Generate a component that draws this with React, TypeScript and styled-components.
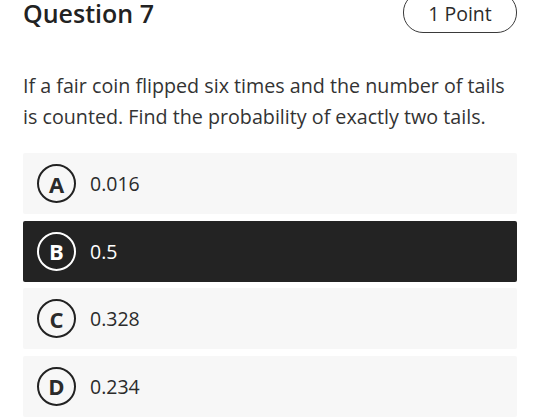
import { createGlobalStyle, styled } from "styled-components"

const GlobalStyle = createGlobalStyle`
    html, body {
        margin: 0;
        padding: 0;
        background: #ffffff;
    }
    body {
        font-family: "Open Sans", "Liberation Sans", sans-serif;
        color: #2b2b2b;
    }
`

const Page = styled.main`
    width: 540px;
    height: 419px;
    overflow: hidden;
    padding: 0 23px;
    box-sizing: border-box;
`

const Header = styled.header`
    display: flex;
    justify-content: space-between;
    align-items: flex-start;
    height: 34px;
`

const Title = styled.h1`
    margin: 0;
    font-size: 25px;
    font-weight: 600;
    line-height: 26px;
    color: #222;
`

const PointPill = styled.span`
    margin-top: -8px;
    width: 114px;
    height: 41px;
    box-sizing: border-box;
    border: 1px solid #3a3a3a;
    border-radius: 20px;
    display: flex;
    align-items: center;
    justify-content: center;
    padding-top: 2px;
    font-size: 19.5px;
    font-weight: 500;
    color: #2b2b2b;
`

const Prompt = styled.p`
    margin: 36px 0 0;
    font-size: 19.7px;
    line-height: 31px;
    color: #333;
`

const Options = styled.ol`
    list-style: none;
    margin: 21px 0 0;
    padding: 0;
    display: flex;
    flex-direction: column;
    gap: 6.6px;
`

const Option = styled.li<{ $selected?: boolean }>`
    height: 61px;
    display: flex;
    align-items: center;
    gap: 14px;
    padding-left: 14px;
    border-radius: 2px;
    background: ${p => (p.$selected ? "#232323" : "#f7f7f7")};
    color: ${p => (p.$selected ? "#ffffff" : "#2b2b2b")};
`

const Letter = styled.span<{ $selected?: boolean }>`
    width: 39px;
    height: 39px;
    box-sizing: border-box;
    border-radius: 50%;
    border: 2px solid ${p => (p.$selected ? "#ffffff" : "#222")};
    display: flex;
    align-items: center;
    justify-content: center;
    font-size: 22px;
    font-weight: 700;
`

const Answer = styled.span`
    font-size: 19.5px;
    font-weight: 500;
`

const answers = [
    { letter: "A", value: "0.016" },
    { letter: "B", value: "0.5" },
    { letter: "C", value: "0.328" },
    { letter: "D", value: "0.234" },
]

export default function App() {
    const selected = "B"

    return (
        <>
            <GlobalStyle />
            <Page>
                <Header>
                    <Title>Question 7</Title>
                    <PointPill>1 Point</PointPill>
                </Header>
                <Prompt>
                    If a fair coin flipped six times and the number of tails is counted. Find the probability of exactly two tails.
                </Prompt>
                <Options>
                    {answers.map(a => (
                        <Option key={a.letter} $selected={a.letter === selected}>
                            <Letter $selected={a.letter === selected}>{a.letter}</Letter>
                            <Answer>{a.value}</Answer>
                        </Option>
                    ))}
                </Options>
            </Page>
        </>
    )
}
